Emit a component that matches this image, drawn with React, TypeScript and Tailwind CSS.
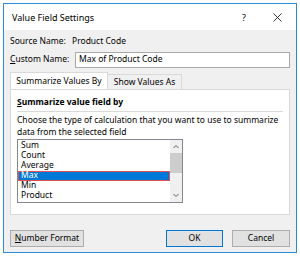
import React from "react";

export default function App() {
  const items = ["Sum", "Count", "Average", "Max", "Min", "Product"];
  return (
    <div className="w-[300px] h-[259px] bg-white pt-[3px] pl-[3px] pr-[3px] pb-[6px] overflow-hidden" style={{ fontFamily: '"Noto Sans", "Open Sans", sans-serif' }}>
      <div className="w-[294px] h-[250px] border border-[#2b8cd6] bg-[#f0f0f0] flex flex-col text-[8.5px] text-black leading-none">
        {/* title bar */}
        <div className="h-[26px] bg-white flex items-center pl-[8px] pr-[10px] shrink-0">
          <span className="text-[9px]">Value Field Settings</span>
          <span className="ml-auto mr-[27px] text-[9px]">?</span>
          <svg width="9" height="9" viewBox="0 0 9 9" className="mr-[4px]">
            <path d="M0.5 0.5 L8.5 8.5 M8.5 0.5 L0.5 8.5" stroke="#222" strokeWidth="0.9" />
          </svg>
        </div>
        {/* body */}
        <div className="flex flex-col px-[6px] pt-[3px] flex-1">
          <div className="flex items-center h-[16px]">
            <span className="w-[62px]">Source Name:</span>
            <span>Product Code</span>
          </div>
          <div className="flex items-center h-[17px] mt-[2px]">
            <span className="w-[65px]"><span className="underline">C</span>ustom Name:</span>
            <div className="flex-1 h-[16px] bg-white border border-[#a9a9a9] flex items-center px-[3px]">Max of Product Code</div>
          </div>
          {/* tabs */}
          <div className="flex mt-[4px] h-[17px] items-end">
            <div className="h-[17px] w-[98px] bg-white border border-[#d9d9d9] border-b-0 flex items-center justify-center">Summarize Values By</div>
            <div className="h-[15px] w-[74px] bg-[#f0f0f0] border border-[#d9d9d9] border-b-0 border-l-0 flex items-center justify-center">Show Values As</div>
          </div>
          <div className="h-[126px] bg-white border border-[#d9d9d9] flex flex-col px-[6px] pt-[8px]">
            <div className="font-bold pb-[4px] border-b border-[#d9d9d9]"><span className="underline">S</span>ummarize value field by</div>
            <div className="mt-[2px] leading-[12px]">Choose the type of calculation that you want to use to summarize<br />data from the selected field</div>
            <div className="mt-[1px] w-[166px] h-[64px] border border-[#828790] flex">
              <div className="flex-1 flex flex-col pt-[1px]">
                {items.map((it) => (
                  <div key={it} className={it === "Max" ? "h-[10px] bg-[#0078d7] text-white border border-[#e05050] pl-[2px] flex items-center" : "h-[10px] pl-[3px] flex items-center"}>{it}</div>
                ))}
              </div>
              <div className="w-[12px] bg-[#f0f0f0] flex flex-col items-center">
                <svg width="8" height="13" viewBox="0 0 8 13"><path d="M1.5 8 L4 5.5 L6.5 8" stroke="#606060" fill="none" strokeWidth="1" /></svg>
                <div className="w-[12px] h-[20px] bg-[#cdcdcd]" />
                <div className="flex-1" />
                <svg width="8" height="13" viewBox="0 0 8 13"><path d="M1.5 5 L4 7.5 L6.5 5" stroke="#606060" fill="none" strokeWidth="1" /></svg>
              </div>
            </div>
          </div>
          {/* buttons */}
          <div className="flex mt-[15px] items-center">
            <div className="w-[74px] h-[17px] bg-[#e1e1e1] border border-[#adadad] flex items-center justify-center"><span className="underline">N</span>umber Format</div>
            <div className="ml-auto w-[57px] h-[17px] bg-[#e1e1e1] border border-[#0078d7] flex items-center justify-center">OK</div>
            <div className="ml-[9px] w-[58px] h-[17px] bg-[#e1e1e1] border border-[#adadad] flex items-center justify-center">Cancel</div>
          </div>
        </div>
      </div>
    </div>
  );
}
